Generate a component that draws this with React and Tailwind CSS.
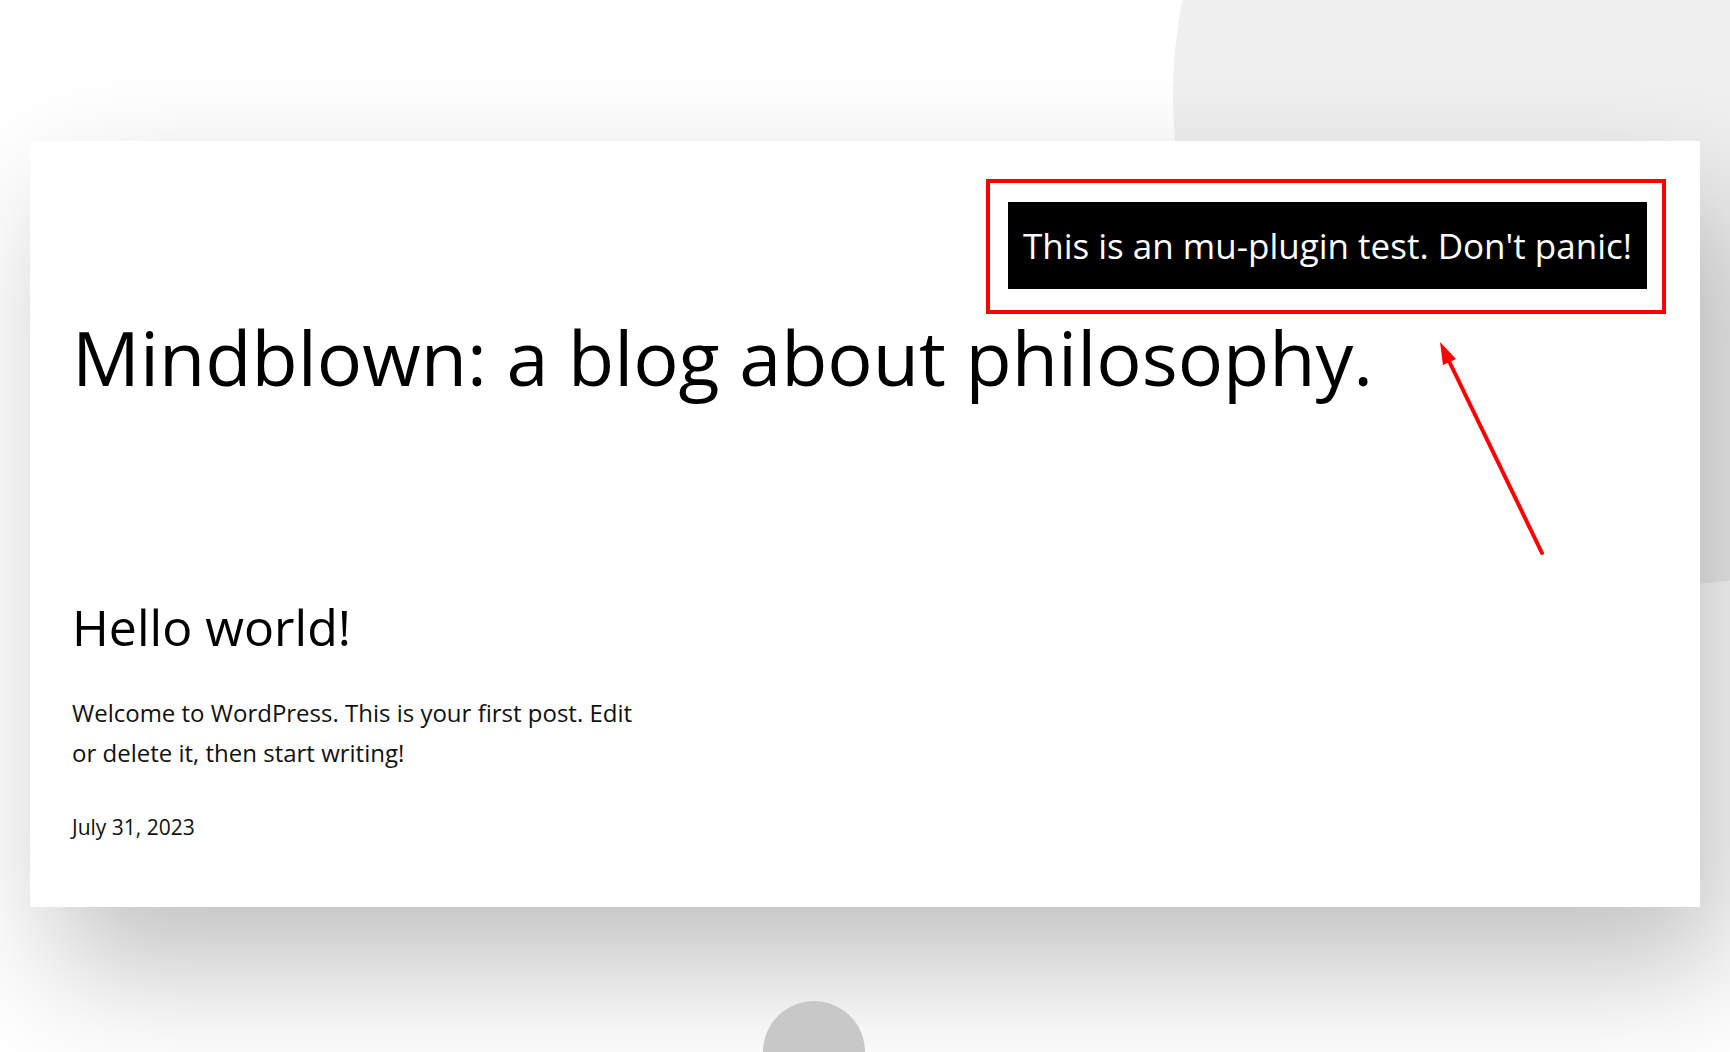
import React from 'react'

const font = { fontFamily: '"Open Sans", "Noto Sans", sans-serif' }

const Banner = () => {
  return (
    <div className="border-4 border-[#ff0000] pl-[18px] pr-[15px] pt-[19px] pb-[21px]">
      <div className="h-[87px] bg-black flex items-center px-[15px]">
        <p className="text-white text-[35px] leading-none whitespace-nowrap">
          This is an mu-plugin test. Don't panic!
        </p>
      </div>
    </div>
  )
}

const Post = () => {
  return (
    <div className="flex flex-col">
      <h2 className="text-[50px] leading-none text-black font-normal">Hello world!</h2>
      <p className="mt-[41px] w-[580px] text-[24px] leading-[40px] text-[#111]">
        Welcome to WordPress. This is your first post. Edit or delete it, then start writing!
      </p>
      <p className="mt-[44px] text-[21px] leading-none text-[#111]">July 31, 2023</p>
    </div>
  )
}

const Arrow = () => {
  return (
    <svg className="absolute left-0 top-0 pointer-events-none" width="1730" height="1052" viewBox="0 0 1730 1052">
      <line x1="1542" y1="553" x2="1449" y2="361" stroke="#ff0000" strokeWidth="4" strokeLinecap="round" />
      <polygon points="1440,342 1456,359 1443,365" fill="#ff0000" />
    </svg>
  )
}

export default function App() {
  return (
    <div className="relative w-[1730px] h-[1052px] overflow-hidden bg-white" style={font}>
      {/* background shapes */}
      <div className="absolute left-[1173px] top-[-395px] w-[980px] h-[980px] rounded-full bg-[#f0f0f0]"></div>

      {/* card */}
      <div className="relative ml-[30px] pt-[141px] w-[1670px]">
        <div className="bg-white shadow-[25px_60px_120px_rgba(0,0,0,0.25)] pl-[42px] pr-[34px] pt-[38px] pb-[69px] flex flex-col">
          <div className="flex justify-end">
            <Banner />
          </div>
          <h1 className="mt-[5px] text-[75.5px] leading-none text-black font-normal whitespace-nowrap">
            Mindblown: a blog about philosophy.
          </h1>
          <div className="mt-[207px]">
            <Post />
          </div>
        </div>
      </div>

      <div className="absolute left-[763px] top-[1001px] w-[102px] h-[102px] rounded-full bg-[#c8c8c8]"></div>

      <Arrow />
    </div>
  )
}
